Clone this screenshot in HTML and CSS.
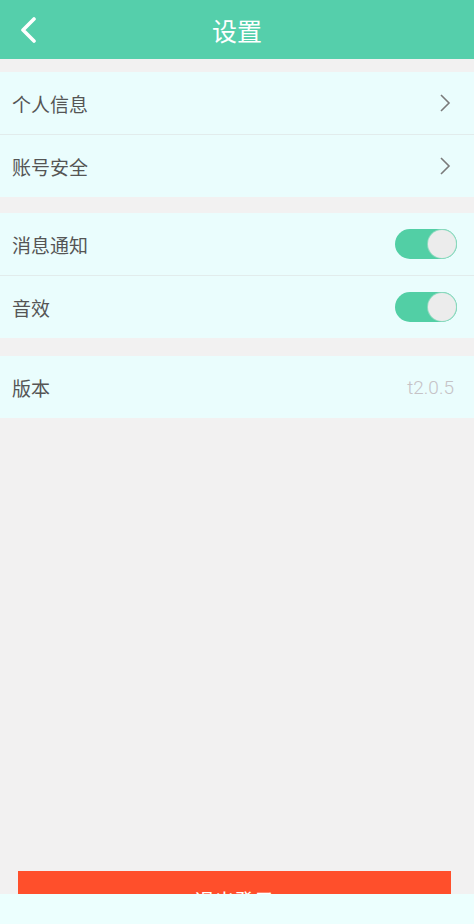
FILE: index.html
```html
<!DOCTYPE html>
<html lang="zh-CN">
<head>
  <meta charset="UTF-8" />
  <meta name="viewport" content="width=device-width, initial-scale=1.0" />
  <title>设置</title>
  <link rel="stylesheet" href="styles.css">
</head>
<body>
  <div class="page">
    <header class="top-bar">
      <div class="back">
        <svg width="20" height="26" viewBox="0 0 20 26">
          <polyline points="15,2 4,13 15,24" fill="none" stroke="#fff" stroke-width="3.6" stroke-linecap="round" stroke-linejoin="round" />
        </svg>
      </div>
      <div class="title">设置</div>
      <div></div>
    </header>

    <section class="group group-first">
      <div class="row">
        <span class="label">个人信息</span>
        <svg class="chevron" width="12" height="20" viewBox="0 0 12 20">
          <polyline points="2,2 10,10 2,18" fill="none" stroke="#7a7a7a" stroke-width="1.6" />
        </svg>
      </div>
      <div class="row">
        <span class="label">账号安全</span>
        <svg class="chevron" width="12" height="20" viewBox="0 0 12 20">
          <polyline points="2,2 10,10 2,18" fill="none" stroke="#7a7a7a" stroke-width="1.6" />
        </svg>
      </div>
    </section>

    <section class="group group-second">
      <div class="row">
        <span class="label">消息通知</span>
        <div class="switch"><div class="knob"></div></div>
      </div>
      <div class="row">
        <span class="label">音效</span>
        <div class="switch"><div class="knob"></div></div>
      </div>
    </section>

    <section class="group group-third">
      <div class="row">
        <span class="label">版本</span>
        <span class="version">t2.0.5</span>
      </div>
    </section>

    <button class="logout">退出登录</button>
  </div>
  <div class="bottom-bar"></div>
</body>
</html>
```

FILE: styles.css
```css
body {
  margin: 0;
  font-family: "Noto Sans CJK SC", "Noto Sans", sans-serif;
  background: #f2f1f1;
}
.page {
  display: flex;
  flex-direction: column;
  min-height: 100vh;
}
.top-bar {
  height: 59px;
  background: #55cfab;
  display: grid;
  grid-template-columns: 60px 1fr 60px;
  align-items: center;
}
.back {
  padding-left: 19px;
  display: flex;
  align-items: center;
  margin-top: 1px;
}
.title {
  text-align: center;
  color: #fff;
  font-size: 25px;
  line-height: 1;
  margin-top: 2px;
}
.group {
  background: #eafdfd;
}
.group-first {
  margin-top: 13px;
}
.group-second {
  margin-top: 16px;
}
.group-third {
  margin-top: 18px;
}
.row {
  height: 62px;
  display: flex;
  align-items: center;
  justify-content: space-between;
  padding: 0 17px 0 12px;
  border-bottom: 1px solid #e2ecec;
}
.row:last-child {
  border-bottom: none;
}
.label {
  font-size: 19px;
  color: #555;
}
.chevron {
  margin-right: 6px;
}
.switch {
  width: 62px;
  height: 30px;
  border-radius: 15px;
  background: #52cfa5;
  display: flex;
  align-items: center;
  justify-content: flex-end;
  box-sizing: border-box;
  padding-right: 1px;
}
.knob {
  width: 28px;
  height: 28px;
  border-radius: 50%;
  background: #ececec;
  box-shadow: 0 0 0 1px #8fd9bf;
}
.version {
  font-family: Roboto, "Noto Sans", sans-serif;
  font-weight: 300;
  font-size: 19px;
  color: #c6c2c6;
  margin-right: 3px;
}
.logout {
  margin: auto 23px 0 18px;
  height: 53px;
  box-sizing: border-box;
  padding: 5px 0 0;
  border: none;
  background: #ff4f2b;
  color: #fff;
  font-family: "Noto Sans CJK SC", sans-serif;
  font-size: 20px;
}
.bottom-bar {
  position: fixed;
  left: 0;
  right: 0;
  bottom: 0;
  height: 30px;
  background: #ecfffe;
}
```
